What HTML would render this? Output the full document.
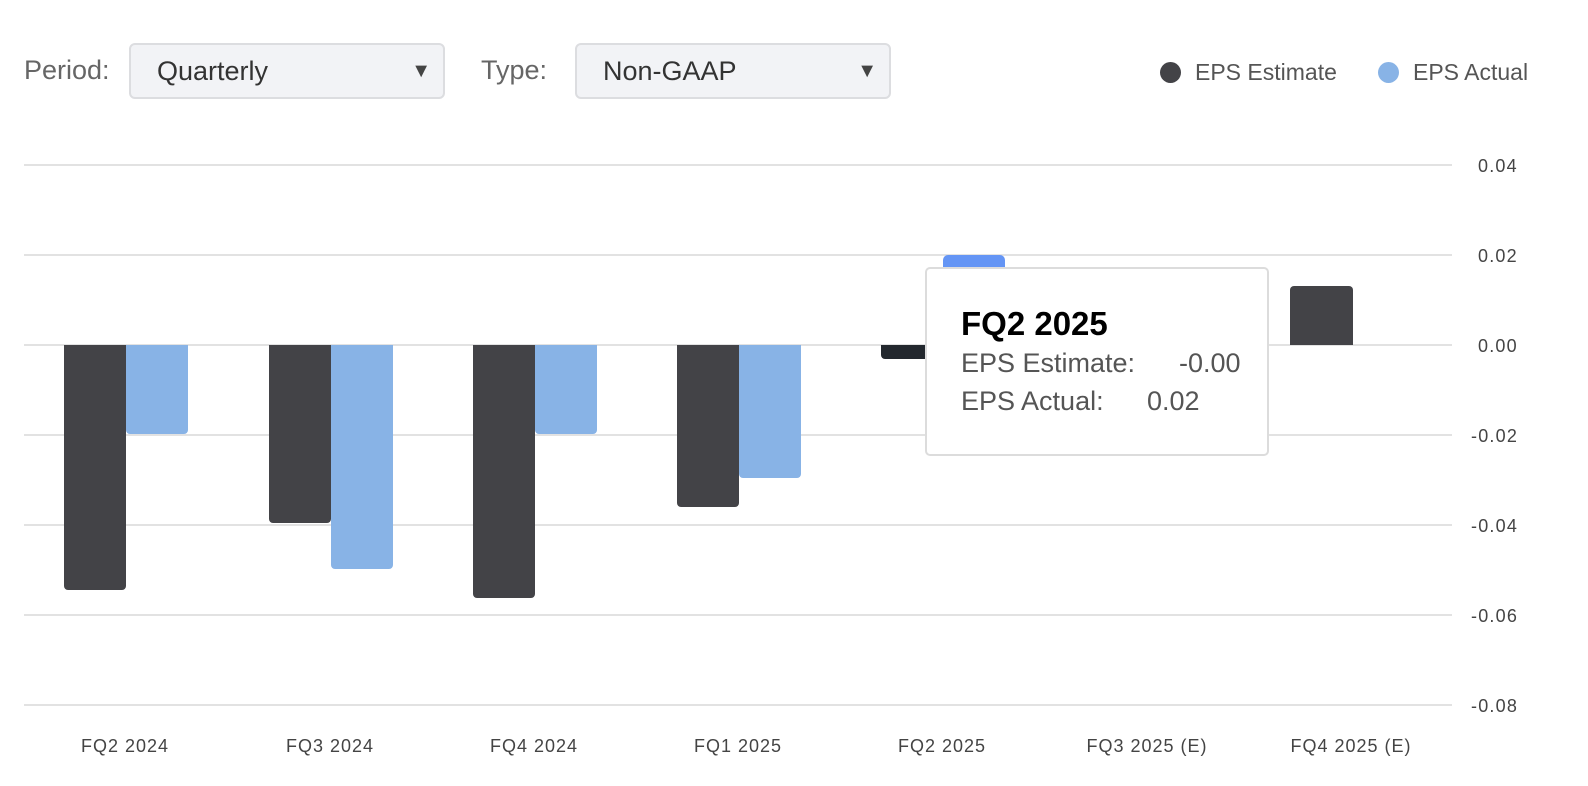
<!DOCTYPE html>
<html><head><meta charset="utf-8"><style>
body{margin:0;width:1588px;height:786px;background:#fff;font-family:"Liberation Sans",Arial,sans-serif;position:relative;overflow:hidden}
.lbl{position:absolute;top:55px;font-size:27px;color:#666}
.sel{position:absolute;top:43px;height:56px;background:#f2f3f6;border:2px solid #dcdde0;border-radius:6px;box-sizing:border-box;font-size:27px;color:#333;line-height:52px;padding-left:26px}
.sel .ar{position:absolute;right:12px;top:0;font-size:20px;color:#444}
.leg{position:absolute;top:59px;font-size:23px;color:#555;line-height:26px}
.dot{display:inline-block;width:21px;height:21px;border-radius:50%;vertical-align:-3px;margin-right:14px}
.tip{position:absolute;left:925px;top:267px;width:344px;height:189px;box-sizing:border-box;border:2px solid #dcdcdc;border-radius:5px;background:#fff}
</style></head><body>
<div class="lbl" style="left:24px">Period:</div>
<div class="sel" style="left:129px;width:316px">Quarterly<span class="ar">▼</span></div>
<div class="lbl" style="left:481px">Type:</div>
<div class="sel" style="left:575px;width:316px">Non-GAAP<span class="ar">▼</span></div>
<div class="leg" style="left:1160px"><span class="dot" style="background:#434347"></span>EPS Estimate</div>
<div class="leg" style="left:1378px"><span class="dot" style="background:#88b3e6"></span>EPS Actual</div>
<svg style="position:absolute;left:0;top:0" width="1588" height="786" font-family="Liberation Sans, Arial, sans-serif">
<g stroke="#d9d9d9" stroke-width="1.5">
<line x1="24" x2="1452" y1="165" y2="165"/><line x1="24" x2="1452" y1="255" y2="255"/><line x1="24" x2="1452" y1="345" y2="345"/><line x1="24" x2="1452" y1="435" y2="435"/><line x1="24" x2="1452" y1="525" y2="525"/><line x1="24" x2="1452" y1="615" y2="615"/><line x1="24" x2="1452" y1="705" y2="705"/>
</g>
<g font-size="18" fill="#444" letter-spacing="1.2">
<text x="1478" y="172">0.04</text><text x="1478" y="262">0.02</text><text x="1478" y="352">0.00</text><text x="1471" y="442">-0.02</text><text x="1471" y="532">-0.04</text><text x="1471" y="622">-0.06</text><text x="1471" y="712">-0.08</text>
</g>
<g font-size="18" fill="#444" text-anchor="middle" letter-spacing="1">
<text x="125" y="752">FQ2 2024</text><text x="330" y="752">FQ3 2024</text><text x="534" y="752">FQ4 2024</text><text x="738" y="752">FQ1 2025</text><text x="942" y="752">FQ2 2025</text><text x="1147" y="752">FQ3 2025 (E)</text><text x="1351" y="752">FQ4 2025 (E)</text>
</g>
<g fill="#434347">
<path d="M64 345H126V586a4 4 0 0 1-4 4H68a4 4 0 0 1-4-4Z"/>
<path d="M269 345H331V519a4 4 0 0 1-4 4H273a4 4 0 0 1-4-4Z"/>
<path d="M473 345H535V594a4 4 0 0 1-4 4H477a4 4 0 0 1-4-4Z"/>
<path d="M677 345H739V503a4 4 0 0 1-4 4H681a4 4 0 0 1-4-4Z"/>
<path d="M1290 345V290a4 4 0 0 1 4-4H1349a4 4 0 0 1 4 4V345Z"/>
</g>
<path fill="#23282e" d="M881 345H943V359H885a4 4 0 0 1-4-4Z"/>
<g fill="#88b3e6">
<path d="M126 345H188V430a4 4 0 0 1-4 4H130a4 4 0 0 1-4-4Z"/>
<path d="M331 345H393V565a4 4 0 0 1-4 4H335a4 4 0 0 1-4-4Z"/>
<path d="M535 345H597V430a4 4 0 0 1-4 4H539a4 4 0 0 1-4-4Z"/>
<path d="M739 345H801V474a4 4 0 0 1-4 4H743a4 4 0 0 1-4-4Z"/>
</g>
<path fill="#6495f5" d="M943 345V260a5 5 0 0 1 5-5H1000a5 5 0 0 1 5 5V345Z"/>
</svg>
<div class="tip">
<div style="position:absolute;left:34px;top:36px;font-size:33px;font-weight:bold;color:#000">FQ2 2025</div>
<div style="position:absolute;left:34px;top:79px;font-size:27px;color:#555">EPS Estimate:</div>
<div style="position:absolute;left:252px;top:79px;font-size:27px;color:#555">-0.00</div>
<div style="position:absolute;left:34px;top:117px;font-size:27px;color:#555">EPS Actual:</div>
<div style="position:absolute;left:220px;top:117px;font-size:27px;color:#555">0.02</div>
</div>
</body></html>
